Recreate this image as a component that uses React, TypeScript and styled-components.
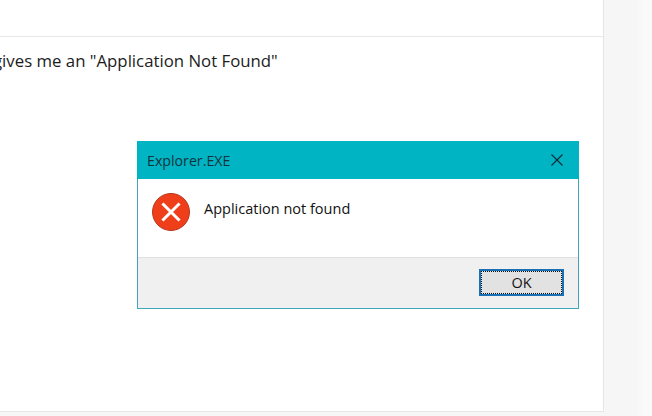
import styled, { createGlobalStyle } from 'styled-components'

const GlobalStyle = createGlobalStyle`
  html, body {
    margin: 0;
    padding: 0;
    width: 652px;
    height: 416px;
    overflow: hidden;
    background: #f7f7f7;
    font-family: 'Open Sans', 'Noto Sans', sans-serif;
  }
`

const Page = styled.div`
  position: relative;
  width: 652px;
  height: 416px;
  overflow: hidden;
  background: linear-gradient(90deg, #f6f6f6 0, #f6f6f6 636px, #fafafa 644px);
`

const Panel = styled.div`
  box-sizing: border-box;
  width: 604px;
  height: 412px;
  background: #fff;
  border-right: 1px solid #e6e6e6;
  border-bottom: 1px solid #e6e6e6;
`

const TopBar = styled.div`
  height: 36px;
  border-bottom: 1px solid #e8e8e8;
`

const Comment = styled.p`
  margin: 13px 0 0 -7px;
  font-size: 16.8px;
  line-height: 22px;
  color: #1c1c1c;
  white-space: nowrap;
`

const Dialog = styled.div`
  position: absolute;
  left: 137px;
  top: 141px;
  box-sizing: border-box;
  width: 442px;
  height: 168px;
  display: flex;
  flex-direction: column;
  background: #fff;
  border: 1px solid #3fa7bb;
  border-top: 0;
`

const TitleBar = styled.div`
  height: 38px;
  margin: 0 -1px;
  padding: 0 16px 0 10px;
  display: flex;
  align-items: center;
  justify-content: space-between;
  background: #00b4c4;
`

const Title = styled.span`
  font-size: 14.2px;
  color: #13333b;
`

const CloseIcon = styled.svg`
  width: 12px;
  height: 12px;
  display: block;
`

const Message = styled.div`
  flex: 1;
  padding: 14px 0 0 14px;
  display: flex;
  align-items: flex-start;
  gap: 14px;
`

const ErrorIcon = styled.svg`
  width: 38px;
  height: 38px;
  flex: none;
`

const MessageText = styled.span`
  font-size: 14.5px;
  line-height: 20px;
  margin-top: 6px;
  color: #111;
`

const Footer = styled.div`
  box-sizing: border-box;
  height: 51px;
  padding: 11px 14px 0 0;
  display: flex;
  justify-content: flex-end;
  align-items: flex-start;
  background: #f0f0f0;
  border-top: 1px solid #dfdfdf;
`

const OkButton = styled.button`
  position: relative;
  box-sizing: border-box;
  width: 85px;
  height: 27px;
  padding: 0;
  background: #e2e2e2;
  border: 2px solid #1a70b5;
  font-family: inherit;
  font-size: 14.5px;
  color: #151515;
  &::after {
    content: '';
    position: absolute;
    inset: 0;
    border: 1px dotted #111;
  }
`

export default function App() {
  return (
    <Page>
      <GlobalStyle />
      <Panel>
        <TopBar />
        <Comment>gives me an "Application Not Found"</Comment>
      </Panel>
      <Dialog>
        <TitleBar>
          <Title>Explorer.EXE</Title>
          <CloseIcon viewBox="0 0 12 12">
            <path d="M0.5 0.5 L11.5 11.5 M11.5 0.5 L0.5 11.5" stroke="#0e2a32" strokeWidth="1.1" fill="none" />
          </CloseIcon>
        </TitleBar>
        <Message>
          <ErrorIcon viewBox="0 0 38 38">
            <circle cx="19" cy="19" r="18.5" fill="#ee3f1a" stroke="#b5391f" strokeWidth="1" />
            <path d="M11.5 11.5 L26.5 26.5 M26.5 11.5 L11.5 26.5" stroke="#fff" strokeWidth="3" strokeLinecap="square" fill="none" />
          </ErrorIcon>
          <MessageText>Application not found</MessageText>
        </Message>
        <Footer>
          <OkButton>OK</OkButton>
        </Footer>
      </Dialog>
    </Page>
  )
}
